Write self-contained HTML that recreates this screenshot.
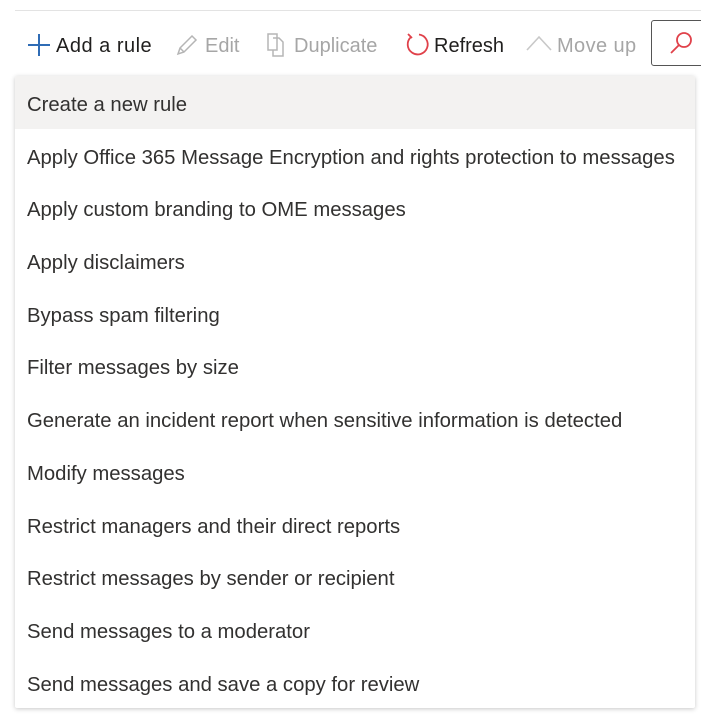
<!DOCTYPE html>
<html><head><style>
body{margin:0;width:701px;height:720px;background:#fff;position:relative;overflow:hidden;font-family:"Liberation Sans",sans-serif;}
.topline{position:absolute;left:15px;right:0;top:10px;height:1px;background:#e3e3e3;}
.tb{position:absolute;top:32px;font-size:20px;line-height:28px;white-space:nowrap;}
.dis{color:#a6a6a6}
.search{position:absolute;left:651px;top:20px;width:60px;height:46px;border:1px solid #555;border-radius:3px;box-sizing:border-box;}
.menu{position:absolute;left:15px;top:76px;width:680px;height:632px;background:#fff;box-shadow:0 1px 5px rgba(0,0,0,.22);border-radius:2px;overflow:hidden;}
.item{height:52.7px;line-height:58px;padding-left:12px;font-size:20.3px;color:#323130;white-space:nowrap;}
.item.hl{background:#f3f2f1}
</style></head><body>
<div class="topline"></div>
<svg style="position:absolute;left:27px;top:33px" width="24" height="24"><path d="M12 1v22M1 12h22" stroke="#2f6cb5" stroke-width="2"/></svg>
<div class="tb" style="left:56px;color:#201f1e;letter-spacing:0.5px">Add a rule</div>
<svg style="position:absolute;left:175px;top:33px" width="26" height="24"><path d="M3 21l2-6L17 3l4 4L9 19z M5 15l4 4" stroke="#b5b5b5" stroke-width="1.5" fill="none"/></svg>
<div class="tb dis" style="left:205px">Edit</div>
<svg style="position:absolute;left:265px;top:32px" width="24" height="26"><path d="M3 2h9v16H3z M8 6h6l4 4v14H8v-6" stroke="#b5b5b5" stroke-width="1.5" fill="none"/></svg>
<div class="tb dis" style="left:294px">Duplicate</div>
<svg style="position:absolute;left:404px;top:31px" width="26" height="26"><path d="M7 6A10 10 0 1 0 15 3.5" stroke="#e0414a" stroke-width="1.8" fill="none"/><path d="M4 3l4 4" stroke="#e0414a" stroke-width="1.8"/></svg>
<div class="tb" style="left:434px;color:#201f1e">Refresh</div>
<svg style="position:absolute;left:526px;top:34px" width="26" height="20"><path d="M1 16L13 3l12 13" stroke="#c8c8c8" stroke-width="1.6" fill="none"/></svg>
<div class="tb dis" style="left:557px;letter-spacing:0.4px">Move up</div>
<div class="search"><svg style="position:absolute;left:17px;top:9px" width="26" height="26"><circle cx="15" cy="10" r="7" stroke="#e0414a" stroke-width="1.8" fill="none"/><path d="M10 15L2 23" stroke="#e0414a" stroke-width="1.8"/></svg></div>
<div class="menu">
<div class="item hl">Create a new rule</div>
<div class="item">Apply Office 365 Message Encryption and rights protection to messages</div>
<div class="item">Apply custom branding to OME messages</div>
<div class="item">Apply disclaimers</div>
<div class="item">Bypass spam filtering</div>
<div class="item">Filter messages by size</div>
<div class="item">Generate an incident report when sensitive information is detected</div>
<div class="item">Modify messages</div>
<div class="item">Restrict managers and their direct reports</div>
<div class="item">Restrict messages by sender or recipient</div>
<div class="item">Send messages to a moderator</div>
<div class="item">Send messages and save a copy for review</div>
</div>
</body></html>
